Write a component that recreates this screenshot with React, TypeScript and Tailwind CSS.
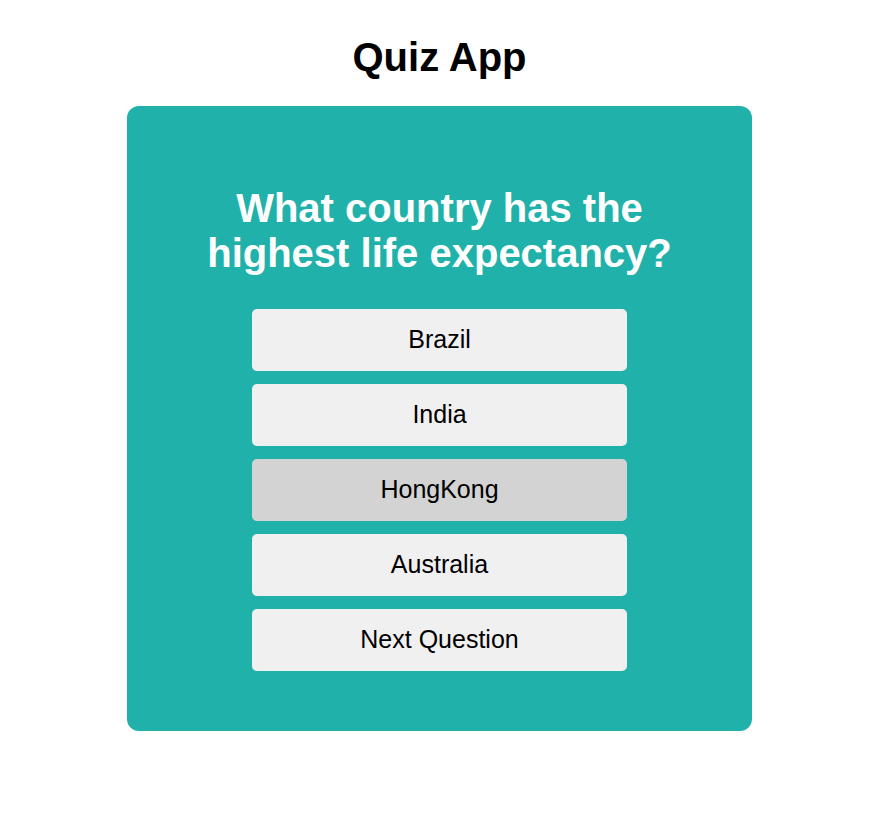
import React from 'react';

const answers = ['Brazil', 'India', 'HongKong', 'Australia'];

export default function App() {
  return (
    <div className="flex min-h-screen flex-col items-center bg-white pr-[6px] font-['Liberation_Sans',Arial,sans-serif] text-black">
      <h1 className="mt-[34px] text-[40px] font-bold leading-[46px]">Quiz App</h1>

      <div className="mt-[26px] flex w-[625px] flex-col items-center rounded-xl bg-[#20b2aa] px-[60px] pt-[80px] pb-[60px]">
        <h2 className="text-center text-[40px] font-bold leading-[45px] text-white">
          What country has the highest life expectancy?
        </h2>

        <div className="mt-[33px] flex w-[375px] flex-col gap-[13px]">
          {answers.map((a, i) => (
            <button
              key={a}
              className={
                i === 2
                  ? 'h-[62px] w-full rounded-[5px] bg-[#d3d3d3] text-[25px] text-black'
                  : 'h-[62px] w-full rounded-[5px] bg-[#f0f0f0] text-[25px] text-black'
              }
            >
              {a}
            </button>
          ))}
          <button className="h-[62px] w-full rounded-[5px] bg-[#f0f0f0] text-[25px] text-black">
            Next Question
          </button>
        </div>
      </div>
    </div>
  );
}
